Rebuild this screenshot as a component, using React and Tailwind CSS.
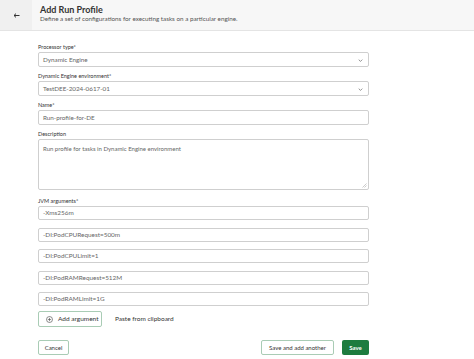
import React from "react";

const font = { fontFamily: "Lato, 'Noto Sans', sans-serif" };

function Chevron() {
  return (
    <svg width="5" height="3" viewBox="0 0 5 3" className="absolute right-[5px] top-[6px]">
      <path d="M0.7 0.6 L2.5 2.4 L4.3 0.6" fill="none" stroke="#777" strokeWidth="0.8" />
    </svg>
  );
}

function Field({ label, value, select }) {
  return (
    <div className="flex flex-col">
      <div className="text-[5.5px] leading-[8px] h-[8px] mb-[1px] text-[#333]">{label}</div>
      <div className="relative h-[15px] border border-[#cfcfcf] rounded-[2px] bg-white flex items-center pl-[4px] text-[6.3px] text-[#666]">
        {value}
        {select && <Chevron />}
      </div>
    </div>
  );
}

function Arg({ value }) {
  return (
    <div className="h-[14px] border border-[#cfcfcf] rounded-[2px] bg-white flex items-center pl-[4px] text-[6.4px] text-[#666]">
      {value}
    </div>
  );
}

export default function App() {
  return (
    <div className="w-[474px] h-[359px] bg-white overflow-hidden" style={font}>
      <div className="flex h-[31px] bg-[#f7f7f7] border-b border-[#e4e4e4]">
        <div className="w-[32px] h-full bg-[#f0f0f0] flex items-center justify-center">
          <svg width="7" height="5" viewBox="0 0 7 5">
            <path d="M6.5 2.5 H1 M3 0.6 L1 2.5 L3 4.4" fill="none" stroke="#333" strokeWidth="1" />
          </svg>
        </div>
        <div className="pl-[8px] pt-[4px] flex flex-col">
          <div className="text-[9px] leading-[11px] font-bold text-[#333]">Add Run Profile</div>
          <div className="text-[6.3px] leading-[8px] text-[#555]">
            Define a set of configurations for executing tasks on a particular engine.
          </div>
        </div>
      </div>

      <div className="ml-[38px] w-[331px] pt-[12px] flex flex-col">
        <div className="flex flex-col gap-[5px]">
          <Field label="Processor type*" value="Dynamic Engine" select />
          <Field label="Dynamic Engine environment*" value="TestDEE-2024-0617-01" select />
          <Field label="Name*" value="Run-profile-for-DE" />
          <div className="flex flex-col">
            <div className="text-[5.5px] leading-[8px] h-[8px] mb-[1px] text-[#333]">Description</div>
            <div className="relative h-[51px] border border-[#cfcfcf] rounded-[2px] bg-white pl-[4px] pt-[4px] text-[6px] leading-[9px] text-[#666]">
              Run profile for tasks in Dynamic Engine environment
              <svg width="5" height="5" viewBox="0 0 5 5" className="absolute right-[1px] bottom-[1px]">
                <path d="M4.5 0.5 L0.5 4.5 M4.5 2.5 L2.5 4.5" stroke="#aaa" strokeWidth="0.6" />
              </svg>
            </div>
          </div>
        </div>

        <div className="mt-[7px] text-[5.5px] leading-[8px] h-[8px] mb-[1px] text-[#333]">JVM arguments*</div>
        <div className="flex flex-col gap-[7.5px]">
          <Arg value="-Xms256m" />
          <Arg value="-DI:PodCPURequest=500m" />
          <Arg value="-DI:PodCPULimit=1" />
          <Arg value="-DI:PodRAMRequest=512M" />
          <Arg value="-DI:PodRAMLimit=1G" />
        </div>

        <div className="mt-[5px] flex items-center">
          <div className="w-[64px] h-[16px] border border-[#a9ccb5] rounded-[2px] flex items-center pl-[7px] gap-[5px] text-[6.5px] text-[#333]">
            <svg width="7" height="7" viewBox="0 0 7 7">
              <circle cx="3.5" cy="3.5" r="3" fill="none" stroke="#444" strokeWidth="0.6" />
              <path d="M3.5 1.8 V5.2 M1.8 3.5 H5.2" stroke="#444" strokeWidth="0.6" />
            </svg>
            Add argument
          </div>
          <div className="ml-[13px] text-[6.5px] text-[#333]">Paste from clipboard</div>
        </div>

        <div className="mt-[13px] flex items-center">
          <div className="w-[31px] h-[15px] border border-[#a9ccb5] rounded-[2px] flex items-center justify-center text-[6px] text-[#333]">
            Cancel
          </div>
          <div className="ml-auto w-[73px] h-[15px] border border-[#a9ccb5] rounded-[2px] flex items-center justify-center text-[6px] text-[#333]">
            Save and add another
          </div>
          <div className="ml-[8px] w-[27px] h-[15px] bg-[#1d7c3f] rounded-[2px] flex items-center justify-center text-[6px] font-bold text-white">
            Save
          </div>
        </div>
      </div>
    </div>
  );
}
